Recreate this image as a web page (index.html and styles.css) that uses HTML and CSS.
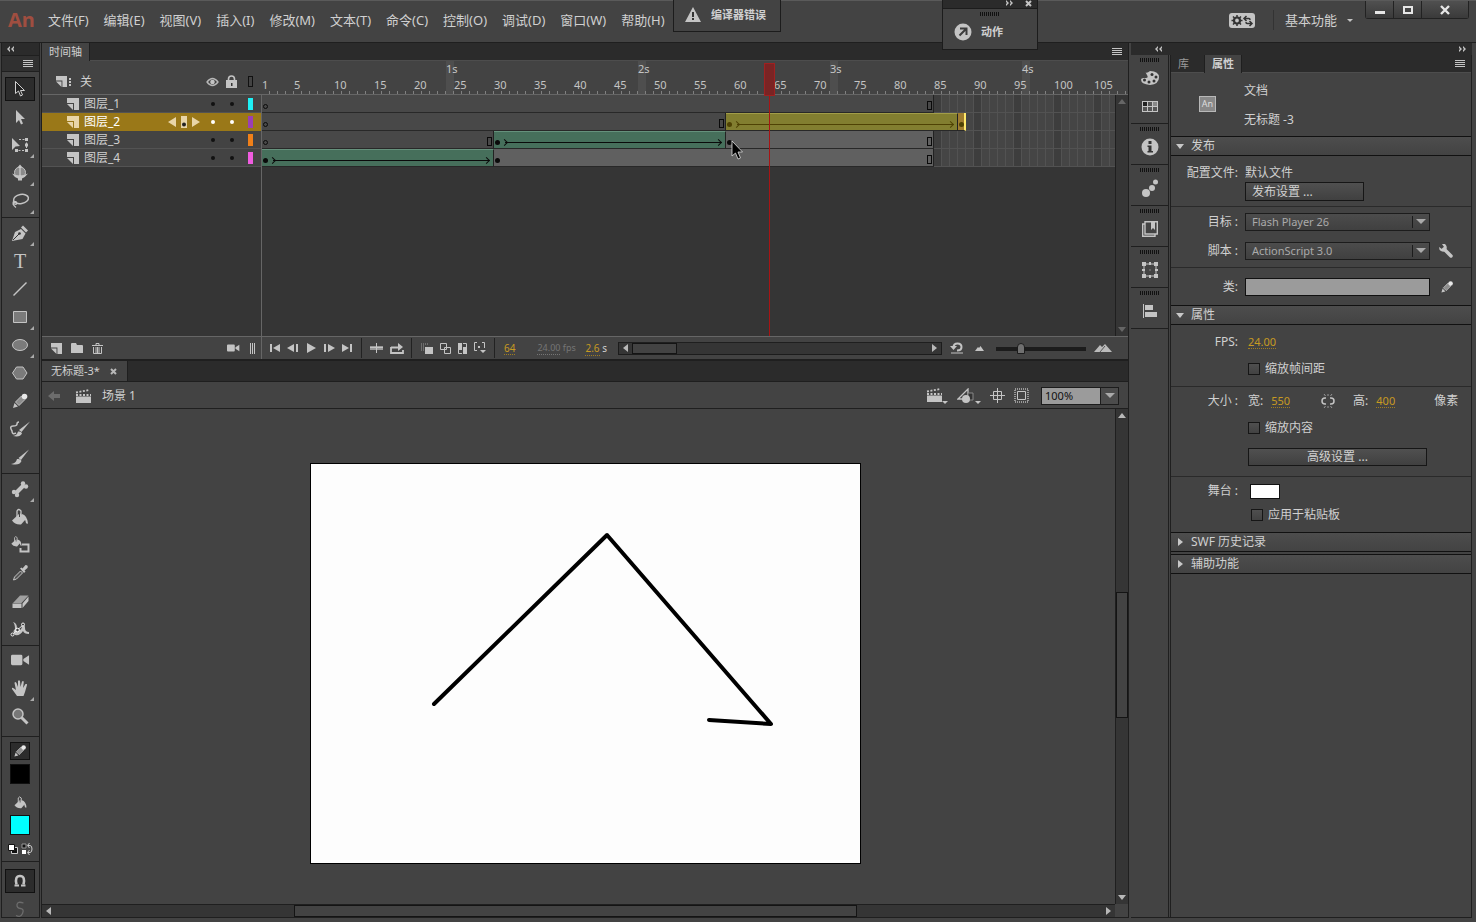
FILE: index.html
```
<!DOCTYPE html>
<html lang="zh-CN">
<head>
    <meta charset="utf-8">
    <title>无标题-3 - An</title>
    <link rel="stylesheet" href="styles.css">
</head>
<body>
<svg class="defs" aria-hidden="true">
	<symbol id="i-page" viewBox="0 0 12 12"><path d="M0 0h12v12H7V5H0z"/><path d="M0 6h6v6z"/></symbol>
	<symbol id="i-menu" viewBox="0 0 10 8"><path d="M0 0h10v1H0zM0 2h10v1H0zM0 4h10v1H0zM0 6h10v1H0z"/></symbol>
	<symbol id="i-left2" viewBox="0 0 8 6"><path d="M3 0L0 3l3 3V4L2 3l1-1zM7 0L4 3l3 3V4L6 3l1-1z"/></symbol>
	<symbol id="i-right2" viewBox="0 0 8 6"><path d="M1 0l3 3-3 3V4l1-1-1-1zM5 0l3 3-3 3V4l1-1-1-1z"/></symbol>
	<symbol id="i-clap" viewBox="0 0 16 14"><path d="M1 7.500h15V14H1z"/><path d="M1 3.500L14 1M1 6h15" fill="none" stroke="#c4c4c4" stroke-width="1.800" stroke-dasharray="2 1.500"/></symbol>
	<symbol id="i-pencil" viewBox="0 0 20 20"><path d="M3 17l1.500-5 3.500 3.500z"/><path d="M5.500 11l6-6 3.500 3.500-6 6z" fill="#8d8d8d" stroke="#c4c4c4"/><circle cx="14.500" cy="5.500" r="2.800" fill="#e8e8e8"/></symbol>
	<symbol id="i-bucket" viewBox="0 0 20 20"><path d="M2 13.500L10 6l6 6-5 5.500q-6 .5-9-4z"/><path d="M7 10V4q1.500-3 4 0v5" fill="none" stroke="#c4c4c4" stroke-width="1.300"/><path d="M12 7q5 1 6 9.500-2 .5-2.200-1-.3-4-3.800-5.500z"/><path d="M9.500 6v4" stroke="#444"/></symbol>
	<symbol id="i-cam" viewBox="0 0 20 14"><path d="M0 3q0-1.500 1.500-1.500h9Q12 1.500 12 3v8q0 1.500-1.500 1.500h-9Q0 12.500 0 11zM13 6l6-4v10l-6-4z"/></symbol>
</svg>

<!-- 菜单栏 -->
<header class="topbar">
	<div class="logo">An</div>
	<nav class="menu">
		<a href="#">文件(F)</a><a href="#">编辑(E)</a><a href="#">视图(V)</a><a href="#">插入(I)</a><a href="#">修改(M)</a><a href="#">文本(T)</a><a href="#">命令(C)</a><a href="#">控制(O)</a><a href="#">调试(D)</a><a href="#">窗口(W)</a><a href="#">帮助(H)</a>
	</nav>
	<button type="button" class="sync" aria-label="同步设置">
		<svg width="26" height="15" viewBox="0 0 26 15"><rect width="26" height="15" rx="3"/><circle cx="8" cy="7.500" r="3" fill="none" stroke="#333" stroke-width="2.200"/><path d="M8 2v2M8 11v2M2.500 7.500h2M11.500 7.500h2M4 3.500l1.500 1.500M12 3.500L10.500 5M4 11.500L5.500 10M12 11.500L10.500 10M15 5.500h5q1 0 1 1.500M17.500 3L15 5.500 17.500 8M23 10.500h-5q-1 0-1-1.500M20.500 8l2.500 2.500-2.500 2.500" fill="none" stroke="#333" stroke-width="1.500"/></svg>
	</button>
	<button type="button" class="workspace">基本功能<i class="caret"></i></button>
	<div class="winbtns">
		<button type="button" aria-label="最小化"><svg width="10" height="10"><path d="M0 6h10v3H0z"/></svg></button>
		<button type="button" aria-label="最大化"><svg width="10" height="10"><path d="M1 2h8v6H1z" fill="none" stroke="#e6e6e6" stroke-width="2"/></svg></button>
		<button type="button" class="close" aria-label="关闭"><svg width="10" height="10"><path d="M1 1l8 8M9 1L1 9" stroke="#e6e6e6" stroke-width="2.400"/></svg></button>
	</div>
</header>

<div class="float float-error">
	<svg width="16" height="15" viewBox="0 0 16 15"><path d="M8 0l8 15H0z"/><path d="M8 5v5M8 11v2" stroke="#333" stroke-width="2"/></svg>
	<span>编译器错误</span>
</div>
<div class="float float-action">
	<div class="float-hd"><svg width="8" height="6"><use href="#i-right2"/></svg><svg width="7" height="7" viewBox="0 0 7 7"><path d="M1 1l5 5M6 1L1 6" stroke="#c4c4c4" stroke-width="2"/></svg></div>
	<i class="grip"></i>
	<div class="float-bd">
		<svg width="18" height="18" viewBox="0 0 18 18"><circle cx="9" cy="9" r="8.500"/><path d="M5.500 12.500l6-6M6 5.500h6.500V12" fill="none" stroke="#3c3c3c" stroke-width="2"/></svg>
		<span>动作</span>
	</div>
</div>

<div class="work">
	<!-- 工具栏 -->
	<aside class="tools">
		<div class="tools-hd"><svg width="8" height="6"><use href="#i-left2"/></svg></div>
		<div class="tools-menu"><svg width="10" height="8"><use href="#i-menu"/></svg></div>
		<div class="group first">
			<button type="button" class="tool on" aria-label="选择"><svg viewBox="0 0 20 20"><path d="M5.500 2.500v12l3-2.500 2 5 2-1-2-4.500h4z" fill="#222" stroke="#d0d0d0"/></svg></button>
			<button type="button" class="tool" aria-label="部分选取"><svg viewBox="0 0 20 20"><path d="M6 3v13l3-3 2 4.500 2-1-2-4.500h4z"/></svg></button>
			<button type="button" class="tool more" aria-label="任意变形"><svg viewBox="0 0 20 20"><path d="M2 3v12l3.500-3.500 4.500-.500z"/><path d="M9 4.500h7.500v11H5.500" fill="none" stroke="#c4c4c4" stroke-dasharray="2 1.500"/><path d="M15 3h3v3h-3zM15 14h3v3h-3zM15 8.500h3v3h-3zM5 14h3v3H5z"/></svg></button>
			<button type="button" class="tool more" aria-label="3D 旋转"><svg viewBox="0 0 20 20"><circle cx="10" cy="9.500" r="5.500" fill="#8a8a8a" stroke="#c4c4c4"/><path d="M10 1.500l2.500 3h-5zM2 10.500q8 4 16 0-3 4-6 5v2H8v-2q-4-1.500-6-5z"/><path d="M10 4v9" fill="none" stroke="#ddd"/></svg></button>
			<button type="button" class="tool more" aria-label="套索"><svg viewBox="0 0 20 20"><ellipse cx="11" cy="8" rx="7.500" ry="4.500" fill="none" stroke="#c4c4c4" stroke-width="1.500" transform="rotate(-10 11 8)"/><path d="M4 10q-2 2 .5 3t2-1.500T3 13q1 2 3 3.500" fill="none" stroke="#c4c4c4" stroke-width="1.300"/></svg></button>
		</div>
		<div class="group">
			<button type="button" class="tool more" aria-label="钢笔"><svg viewBox="0 0 20 20"><path d="M2 18l3-9 6-3 4.500 4.500-3 5.500z"/><path d="M11 4.500l2-2 5 5-2 2z"/><path d="M3 17l6-6" stroke="#333"/><circle cx="9.500" cy="10.500" r="1.300" fill="#333"/></svg></button>
			<button type="button" class="tool" aria-label="文本"><span class="t">T</span></button>
			<button type="button" class="tool" aria-label="线条"><svg viewBox="0 0 20 20"><path d="M3.500 16.500l13-13" stroke="#c4c4c4" stroke-width="1.500"/></svg></button>
			<button type="button" class="tool more" aria-label="矩形"><svg viewBox="0 0 20 20"><path d="M3.500 4.500h13v11h-13z" fill="#7b7b7b" stroke="#c4c4c4"/></svg></button>
			<button type="button" class="tool more" aria-label="椭圆"><svg viewBox="0 0 20 20"><ellipse cx="10" cy="10" rx="7.500" ry="5.500" fill="#7b7b7b" stroke="#c4c4c4"/></svg></button>
			<button type="button" class="tool" aria-label="多角星形"><svg viewBox="0 0 20 20"><path d="M6.500 4h6.500l4 6-4 6H6.500l-4-6z" fill="#7b7b7b" stroke="#c4c4c4"/></svg></button>
			<button type="button" class="tool" aria-label="铅笔"><svg viewBox="0 0 20 20"><use href="#i-pencil"/></svg></button>
			<button type="button" class="tool" aria-label="画笔"><svg viewBox="0 0 20 20"><path d="M9 3q-2 0-2 2T3 7t-1 5q0 4 4 2" fill="none" stroke="#c4c4c4" stroke-width="1.500"/><path d="M20 2.500L11.500 13 9 11z"/><path d="M3 17q4-.5 5-4.500 3.500-.5 4 2-2 4-9 2.500z"/></svg></button>
			<button type="button" class="tool" aria-label="刷子"><svg viewBox="0 0 20 20"><path d="M19 2.500L11 13 8.500 11z"/><path d="M1 17q5-.5 6-5 4-.5 4.500 2-2 5-10.500 3z"/></svg></button>
		</div>
		<div class="group">
			<button type="button" class="tool more" aria-label="骨骼"><svg viewBox="0 0 20 20"><path d="M6 14l8-8" stroke="#c4c4c4" stroke-width="4"/><circle cx="4" cy="13" r="2.200"/><circle cx="7" cy="16" r="2.200"/><circle cx="13" cy="4.500" r="2.200"/><circle cx="16" cy="7.500" r="2.200"/></svg></button>
			<button type="button" class="tool" aria-label="颜料桶"><svg viewBox="0 0 20 20"><use href="#i-bucket"/></svg></button>
			<button type="button" class="tool" aria-label="墨水瓶"><svg viewBox="0 0 20 20"><use href="#i-bucket" width="13" height="13"/><path d="M12 9.500h6.500v7h-8V13" fill="none" stroke="#c4c4c4" stroke-width="2"/></svg></button>
			<button type="button" class="tool" aria-label="滴管"><svg viewBox="0 0 20 20"><path d="M3.500 17l1-3 6-6 2 2-6 6z" fill="#555" stroke="#c4c4c4"/><path d="M10 5.500l1.500-1 1 1L15.500 2q3 0 2 3l-3 2.500 1 1L14 10z"/></svg></button>
			<button type="button" class="tool" aria-label="橡皮擦"><svg viewBox="0 0 20 20"><path d="M3 12l7-7.500h8.500L11.500 12z" fill="#a0a0a0"/><path d="M2.500 12.500h9V17h-9zM12.500 12.500l6-7V10l-6 7z"/></svg></button>
			<button type="button" class="tool" aria-label="宽度"><svg viewBox="0 0 20 20"><path d="M3 3q4 1 4 6l3 2q2-1 2-5 3-1 3 3 0 4 4 4v2q-5 0-6-3-3 5-8 4-3-4 0-6 0-5-2-7z"/><path d="M3 15L14 5" stroke="#eee"/><circle cx="2.500" cy="15.500" r="1.500" fill="#444" stroke="#eee"/><circle cx="7.500" cy="11" r="1.800" fill="#444" stroke="#fff"/><circle cx="13" cy="5.500" r="1.500" fill="#444" stroke="#eee"/></svg></button>
		</div>
		<div class="group view">
			<button type="button" class="tool" aria-label="摄像头"><svg viewBox="0 0 20 20"><use href="#i-cam" x="1" y="3" width="19" height="14"/></svg></button>
			<button type="button" class="tool more" aria-label="手形"><svg viewBox="0 0 20 20"><path d="M7 18l-5-7q-.5-2 2-.5L6 12 4.500 5q.5-2 2 0L8 9V3q1-1.500 2 0l.500 6L12 3.500q1.500-1 1.800.5L13 10l2.500-4q2-.5 1.500 1l-2 7-1.500 4z"/></svg></button>
			<button type="button" class="tool" aria-label="缩放"><svg viewBox="0 0 20 20"><circle cx="8" cy="8" r="5" fill="#777" stroke="#c4c4c4" stroke-width="1.500"/><path d="M11.500 11.500l6 6" stroke="#c4c4c4" stroke-width="3"/></svg></button>
		</div>
		<div class="group colors">
			<button type="button" class="mini on" aria-label="笔触颜色"><svg width="18" height="16" viewBox="0 0 20 20"><use href="#i-pencil"/></svg></button>
			<button type="button" class="swatch black" aria-label="笔触"></button>
			<button type="button" class="mini fill" aria-label="填充颜色"><svg width="15" height="15" viewBox="0 0 20 20"><use href="#i-bucket"/></svg></button>
			<button type="button" class="swatch cyan" aria-label="填充"></button>
			<div class="swap">
				<button type="button" aria-label="黑白"><svg width="12" height="12"><path d="M4.500 4.500h6v6h-6z" fill="#111" stroke="#ccc"/><path d="M1.500 1.500h6v6h-6z" fill="#fff" stroke="#111"/></svg></button>
				<button type="button" aria-label="交换颜色"><svg width="13" height="12"><path d="M1 1h4v4H1z" fill="#111" stroke="#999"/><path d="M1 7h4v4H1z" fill="#fff"/><path d="M7 2.500h2q2 0 2 3.500t-2 3.500H7M8.500 0L6.500 2.500 8.500 5M8.500 7L6.500 9.500l2 2.500" fill="none" stroke="#ccc"/></svg></button>
			</div>
		</div>
		<div class="group last">
			<button type="button" class="tool on snap" aria-label="贴紧至对象"><svg viewBox="0 0 20 20"><path d="M6.500 13.500q-2-8.500 3.500-8.500t3.500 8.500" fill="none" stroke="#c4c4c4" stroke-width="2.600"/><path d="M9 14.500H4.500M15.500 14.500H11" stroke="#c4c4c4" stroke-width="2"/></svg></button>
			<button type="button" class="tool dim" aria-label="平滑"><svg viewBox="0 0 20 20"><path d="M13.500 4q-6-2-6.500 1.500T10.500 9.500t2 5T6 16.500" fill="none" stroke="#777" stroke-width="1.300"/></svg></button>
		</div>
	</aside>

	<main class="main">
		<!-- 时间轴 -->
		<section class="timeline">
			<div class="tabs"><a href="#" class="tab">时间轴</a><svg class="tabs-menu" width="10" height="8"><use href="#i-menu"/></svg></div>
			<div class="tl-head">
				<div class="layer-hd">
					<svg width="16" height="12"><use href="#i-page" width="11" height="11"/><path d="M13 2h2v2h-2zM13 5h2v2h-2zM13 8h2v2h-2z"/></svg>
					<span class="off">关</span>
					<span class="cell"><svg width="13" height="10" viewBox="0 0 13 10"><path d="M1 5q5.500-7 11 0-5.500 7-11 0z" fill="none" stroke="#b8b8b8" stroke-width="1.300"/><circle cx="6.500" cy="5" r="2.300"/></svg></span>
					<span class="cell"><svg width="11" height="13"><path d="M2.500 6V4q0-3 3-3t3 3v2" fill="none" stroke="#c4c4c4" stroke-width="1.600"/><path d="M0 5h11v8H0z"/><path d="M5 8h1.500v3H5z" fill="#333"/></svg></span>
					<span class="cell"><i class="outline"></i></span>
				</div>
				<div class="ruler">
					<div class="secs"><b class="s0"></b><b>1s</b><b>2s</b><b>3s</b><b>4s</b></div>
					<div class="nums"><b class="n1">1</b><b>5</b><b>10</b><b>15</b><b>20</b><b>25</b><b>30</b><b>35</b><b>40</b><b>45</b><b>50</b><b>55</b><b>60</b><b>65</b><b>70</b><b>75</b><b>80</b><b>85</b><b>90</b><b>95</b><b>100</b><b>105</b></div>
				</div>
			</div>
			<div class="tl-body">
				<div class="layers">
					<div class="layer"><svg width="12" height="12"><use href="#i-page"/></svg><span class="name">图层_1</span><span class="cell"><i class="dot"></i></span><span class="cell"><i class="dot"></i></span><span class="cell"><i class="color c1"></i></span></div>
					<div class="layer active"><svg width="12" height="12"><use href="#i-page"/></svg><span class="name">图层_2</span><span class="keynav"><svg width="32" height="12" viewBox="0 0 32 12"><path d="M8 1v10L0 6zM24 1v10l8-5z"/><path d="M13 0h6v12h-6z"/><circle cx="16" cy="8.500" r="2" fill="#222"/></svg></span><span class="cell"><i class="dot"></i></span><span class="cell"><i class="dot"></i></span><span class="cell"><i class="color c2"></i></span></div>
					<div class="layer"><svg width="12" height="12"><use href="#i-page"/></svg><span class="name">图层_3</span><span class="cell"><i class="dot"></i></span><span class="cell"><i class="dot"></i></span><span class="cell"><i class="color c3"></i></span></div>
					<div class="layer"><svg width="12" height="12"><use href="#i-page"/></svg><span class="name">图层_4</span><span class="cell"><i class="dot"></i></span><span class="cell"><i class="dot"></i></span><span class="cell"><i class="color c4"></i></span></div>
				</div>
				<div class="frames">
					<div class="track"><div class="span" style="--n:84"><i class="key empty"></i><i class="end"></i></div></div>
					<div class="track"><div class="span" style="--n:58"><i class="key empty"></i><i class="end"></i></div><div class="span tween sel" style="--n:29"><i class="key"></i><i class="arrow"></i></div><div class="span sel last" style="--n:1"><i class="key"></i></div></div>
					<div class="track"><div class="span" style="--n:29"><i class="key empty"></i><i class="end"></i></div><div class="span tween" style="--n:29"><i class="key"></i><i class="arrow"></i></div><div class="span full" style="--n:26"><i class="key"></i><i class="end"></i></div></div>
					<div class="track"><div class="span tween" style="--n:29"><i class="key"></i><i class="arrow"></i></div><div class="span full" style="--n:55"><i class="key"></i><i class="end"></i></div></div>
				</div>
				<div class="vscroll off"><i class="up"></i><i class="down"></i></div>
			</div>
			<div class="playhead" style="--frame:64"></div>
			<div class="tl-foot">
				<div class="foot-l">
					<button type="button" aria-label="新建图层"><svg width="11" height="11"><use href="#i-page"/></svg></button>
					<button type="button" aria-label="新建文件夹"><svg width="12" height="10"><path d="M0 1q0-1 1-1h4l1 2h5q1 0 1 1v7H0z"/></svg></button>
					<button type="button" aria-label="删除"><svg width="11" height="11"><path d="M0 2.500h11M4 2V.500h3V2M1.500 4v6.500h8V4M4 4v6M5.500 4v6M7 4v6" fill="none" stroke="#c4c4c4"/></svg></button>
					<button type="button" class="cam" aria-label="添加摄像头"><svg width="13" height="10" viewBox="0 0 19 14"><use href="#i-cam" width="19" height="14"/></svg></button>
					<svg width="7" height="11"><path d="M1 0h1v11H1zM3 0h1v11H3zM5 0h1v11H5z"/></svg>
				</div>
				<div class="foot-r">
					<div class="play">
						<button type="button" aria-label="转到第一帧"><svg width="12" height="8"><path d="M1 0h2v8H1zM11 0v8L4 4z"/></svg></button>
						<button type="button" aria-label="后退一帧"><svg width="12" height="8"><path d="M0 4l7-4v8zM9 0h2v8H9z"/></svg></button>
						<button type="button" aria-label="播放"><svg width="12" height="10"><path d="M2 0l9 5-9 5z"/></svg></button>
						<button type="button" aria-label="前进一帧"><svg width="12" height="8"><path d="M1 0h2v8H1zM5 0l7 4-7 4z"/></svg></button>
						<button type="button" aria-label="转到最后一帧"><svg width="12" height="8"><path d="M1 0l7 4-7 4zM9 0h2v8H9z"/></svg></button>
					</div>
					<div class="opts">
						<button type="button" aria-label="帧居中"><svg width="13" height="10"><path d="M0 3h13v4H0z" fill="#999"/><path d="M0 4h13v1H0zM6 0h1v10H6z"/></svg></button>
						<button type="button" aria-label="循环"><svg width="14" height="11"><path d="M1 4v6h12V7M1 4.500h7" fill="none" stroke="#c4c4c4" stroke-width="1.800"/><path d="M8 0l5 4-5 4z"/></svg></button>
					</div>
					<div class="opts onion">
						<button type="button" aria-label="绘图纸外观"><svg width="12" height="11"><path d="M4 4h8v7H4z"/><path d="M0 1h7M0 3h4M0 5h3M0 7h3" stroke="#999" stroke-dasharray="1 1"/></svg></button>
						<button type="button" aria-label="绘图纸外观轮廓"><svg width="11" height="11"><path d="M.5.500h6v6h-6zM4.500 4.500h6v6h-6z" fill="none" stroke="#c4c4c4"/></svg></button>
						<button type="button" aria-label="编辑多个帧"><svg width="9" height="11"><path d="M0 0h4v7H0zM5 4h4v7H5z"/><path d="M.5 7v3.500H4M5 .500h3.500V4" fill="none" stroke="#c4c4c4"/></svg></button>
						<button type="button" aria-label="修改标记"><svg width="12" height="12"><path d="M3 .500H.500v8H3M8 .500h2.500V6" fill="none" stroke="#c4c4c4"/><path d="M4 4h2v2H4zM6 8h6l-3 3z"/></svg></button>
					</div>
					<a href="#" class="hot frame-no">64</a>
					<span class="fps"><u>24.00</u> fps</span>
					<span class="time"><a href="#" class="hot">2.6</a> s</span>
					<div class="hscroll mini-scroll"><i class="left"></i><div class="rail"><i class="thumb"></i></div><i class="right"></i></div>
					<button type="button" aria-label="重置缩放"><svg width="13" height="12"><path d="M3.500 5.500q0-4 4-4 4 0 4 3.500T7 8.500" fill="none" stroke="#c4c4c4" stroke-width="2"/><path d="M0 4h7L3.500 8zM1 10.500h12v1H1z"/></svg></button>
					<svg class="m-small" width="9" height="5"><path d="M0 5l3-4 1 1 1.500-2L9 5z"/></svg>
					<input type="range" class="range" min="0" max="100" value="26" aria-label="时间轴缩放">
					<svg width="18" height="8"><path d="M0 8l6-7 2 2 3-3 7 8z" fill="#bbb"/><path d="M6 8l5-6" fill="none" stroke="#555"/></svg>
				</div>
			</div>
		</section>

		<!-- 文档 -->
		<section class="doc">
			<div class="tabs doc-tabs"><a href="#" class="tab">无标题-3*<svg width="7" height="7"><path d="M1 1l5 5M6 1L1 6" stroke="#b8b8b8" stroke-width="2"/></svg></a></div>
			<div class="scene">
				<svg class="back" width="13" height="10"><path d="M0 5l6-5v3h6v4H6v3z" fill="#6c6c6c"/></svg>
				<svg width="16" height="14"><use href="#i-clap"/></svg>
				<span class="scene-name">场景 1</span>
				<button type="button" aria-label="编辑场景"><svg width="22" height="16"><use href="#i-clap" width="16" height="14"/><path d="M16 13h6l-3 3z"/></svg></button>
				<button type="button" aria-label="编辑元件"><svg width="24" height="16"><path d="M1 11L11 1v10z" fill="none" stroke="#c4c4c4" stroke-width="1.300"/><path d="M11 5h5v7h-5z" fill="#333" stroke="#888"/><circle cx="9" cy="11" r="4"/><path d="M18 13h6l-3 3z"/></svg></button>
				<button type="button" aria-label="舞台居中"><svg width="15" height="15"><path d="M3.500 3.500h8v8h-8zM7.500 0v15M0 7.500h15" fill="none" stroke="#c4c4c4"/></svg></button>
				<button type="button" aria-label="剪切掉舞台范围以外的内容"><svg width="15" height="15"><path d="M1 1h13v13H1z" fill="none" stroke="#999" stroke-width="2" stroke-dasharray="1 1"/><path d="M3.500 3.500h8v8h-8z" fill="none" stroke="#c4c4c4"/></svg></button>
				<label class="select zoom"><select aria-label="显示比例"><option>100%</option><option>200%</option></select></label>
			</div>
			<div class="canvas">
				<div class="paste">
					<svg class="stage" width="549" height="399"><path d="M123 240L296 71l164 189-62-4" fill="none" stroke="#000" stroke-width="4" stroke-linecap="round" stroke-linejoin="round"/></svg>
				</div>
				<div class="vscroll"><i class="up"></i><div class="rail"><i class="thumb"></i></div><i class="down"></i></div>
				<div class="hscroll"><i class="left"></i><div class="rail"><i class="thumb"></i></div><i class="right"></i></div>
			</div>
		</section>
	</main>

	<!-- 右侧面板 -->
	<aside class="side">
		<div class="side-hd"><svg width="8" height="6"><use href="#i-left2"/></svg><svg width="8" height="6"><use href="#i-right2"/></svg></div>
		<div class="side-bd">
			<div class="dock">
				<div class="dock-g"><i class="grip"></i>
					<button type="button" aria-label="颜色"><svg width="20" height="16"><path d="M10 1q9 0 9 6.500T10 15Q1 14 1 9.500q0-2 4-1.500T7 5 6 2.500 10 1z"/><g fill="#333"><circle cx="12" cy="4.500" r="1.500"/><circle cx="16" cy="7" r="1.500"/><circle cx="14" cy="11" r="1.500"/><circle cx="9" cy="12" r="1.500"/><circle cx="4.500" cy="10" r="1.500"/></g></svg></button>
					<button type="button" aria-label="样本"><svg width="16" height="11"><path d="M0 0h16v11H0z"/><path d="M1 1h4v4H1z" fill="#222"/><path d="M6 1h4v4H6z" fill="#555"/><path d="M11 1h4v4h-4z" fill="#888"/><path d="M1 6h4v4H1zM6 6h4v4H6zM11 6h4v4h-4z" fill="#555"/></svg></button>
				</div>
				<div class="dock-g"><i class="grip"></i><button type="button" aria-label="信息"><svg width="18" height="18"><circle cx="9" cy="9" r="8.500"/><path d="M7.500 3h3v3h-3zM6.500 7.500h4V13H12v1.500H6.500V13h1V9h-1z" fill="#333"/></svg></button></div>
				<div class="dock-g"><i class="grip"></i><button type="button" aria-label="对齐"><svg width="18" height="18"><circle cx="5" cy="14" r="4"/><circle cx="11" cy="9" r="3"/><circle cx="14.500" cy="3" r="2.500"/></svg></button></div>
				<div class="dock-g"><i class="grip"></i><button type="button" aria-label="库"><svg width="16" height="16"><path d="M3 .700h12.300V13H3zM3 3H.700v12.300H13V13" fill="none" stroke="#c4c4c4" stroke-width="1.400"/><path d="M9 1h4v8l-2-2-2 2z"/></svg></button></div>
				<div class="dock-g"><i class="grip"></i><button type="button" aria-label="变形"><svg width="16" height="16"><path d="M2 2h12v12H2z" fill="none" stroke="#c4c4c4"/><path d="M0 0h4v4H0zM12 0h4v4h-4zM0 12h4v4H0zM12 12h4v4h-4zM7 0h2v3H7zM7 13h2v3H7zM0 7h3v2H0zM13 7h3v2h-3zM7.500 7.500h1v1h-1z"/></svg></button></div>
				<div class="dock-g"><i class="grip"></i><button type="button" aria-label="排列"><svg width="16" height="14"><path d="M1 0h1v14H1zM3 1h8v5H3zM3 8h12v5H3z"/></svg></button></div>
			</div>
			<form class="props">
				<div class="tabs"><a href="#" class="tab gray">库</a><a href="#" class="tab">属性</a><svg class="tabs-menu" width="10" height="8"><use href="#i-menu"/></svg></div>
				<div class="docinfo">
					<span class="an">An</span>
					<div><p>文档</p><p>无标题 -3</p></div>
				</div>
				<h2 class="hd open">发布</h2>
				<div class="block b1">
					<div class="row"><span class="lab">配置文件:</span><span>默认文件</span></div>
					<div class="row"><span class="lab"></span><button type="button" class="btn w120">发布设置 ...</button></div>
				</div>
				<div class="block b2">
					<div class="row"><label class="lab" for="target">目标 :</label><span class="select"><select id="target"><option>Flash Player 26</option></select></span></div>
					<div class="row"><label class="lab" for="script">脚本 :</label><span class="select"><select id="script"><option>ActionScript 3.0</option></select></span><svg class="tail" width="14" height="14" viewBox="0 0 14 14"><path d="M5 5l7 7" stroke="#c4c4c4" stroke-width="3.500" stroke-linecap="round"/><path d="M3 0l3 0Q9 3 7 6T2 7Q0 6 0 3l3 2 2-2z"/></svg></div>
				</div>
				<div class="block b3">
					<div class="row"><label class="lab" for="cls">类:</label><input type="text" id="cls" class="text"><svg class="tail" width="16" height="16" viewBox="0 0 20 20"><use href="#i-pencil"/></svg></div>
				</div>
				<h2 class="hd open">属性</h2>
				<div class="block b4">
					<div class="row"><span class="lab">FPS:</span><a href="#" class="hot in">24.00</a></div>
					<div class="row"><span class="lab"></span><label class="check"><input type="checkbox">缩放帧间距</label></div>
				</div>
				<div class="block b5">
					<div class="row size"><span class="lab">大小 :</span><span class="in">宽:</span><a href="#" class="hot">550</a><svg class="link" width="14" height="14"><path d="M5 4H4Q1 4 1 7t3 3h1M9 4h1q3 0 3 3t-3 3H9" fill="none" stroke="#c4c4c4" stroke-width="1.500"/><path d="M3 0l1.500 2M11 0L9.500 2M7 0v2M3 14l1.500-2M11 14l-1.500-2M7 14v-2" stroke="#999"/></svg><span>高:</span><a href="#" class="hot">400</a><span class="px">像素</span></div>
					<div class="row"><span class="lab"></span><label class="check"><input type="checkbox">缩放内容</label></div>
					<div class="row wide"><span class="lab"></span><button type="button" class="btn w180">高级设置 ...</button></div>
				</div>
				<div class="block b6">
					<div class="row"><span class="lab">舞台 :</span><button type="button" class="bgcolor" aria-label="舞台颜色"></button></div>
					<div class="row"><span class="lab"></span><label class="check deep"><input type="checkbox">应用于粘贴板</label></div>
				</div>
				<h2 class="hd">SWF 历史记录</h2>
				<h2 class="hd next">辅助功能</h2>
			</form>
		</div>
	</aside>
</div>
<svg class="cursor" width="12" height="20" viewBox="0 0 12 20"><path d="M1 1v15l3.500-3 2.500 6 2.500-1L7 12h4.500z" fill="#000" stroke="#ddd" stroke-width=".8"/></svg>
</body>
</html>
```

FILE: styles.css
```
*{box-sizing:border-box;}
html,body{height:100%;}
body{margin:0;background:#434343;color:#d0d0d0;font:12px/18px "Noto Sans","Noto Sans CJK SC",sans-serif;display:flex;flex-direction:column;overflow:hidden;position:relative;}
button{margin:0;padding:0;border:0;background:none;color:inherit;font:inherit;display:flex;align-items:center;justify-content:center;}
a{color:inherit;text-decoration:none;}
p,h2{margin:0;font-weight:normal;}
svg{display:block;flex:none;fill:#c4c4c4;}
i{display:block;flex:none;}
.defs{position:absolute;width:0;height:0;}

/* 菜单栏 */
.topbar{height:42px;flex:none;display:flex;align-items:center;border-top:1px solid #5a5a5a;padding:0 7px 3px 8px;}
.logo{width:40px;color:#a04e40;font:bold 20px/30px "Noto Sans",sans-serif;}
.menu{display:flex;gap:15px;font-size:13px;flex:1;white-space:nowrap;}
.sync{margin-right:18px;}
.workspace{border-left:1px solid #333;padding-left:11px;height:20px;font-size:13px;gap:10px;}
.caret{border:3px solid transparent;border-top-color:#c4c4c4;border-bottom:0;}
.winbtns{display:flex;align-self:flex-start;margin-left:12px;border:1px solid #222;border-top:0;border-radius:0 0 3px 3px;}
.winbtns button{width:28px;height:17px;background:linear-gradient(#505050,#3a3a3a);border-right:1px solid #222;}
.winbtns .close{width:46px;border-right:0;}
.winbtns svg{fill:#e6e6e6;}

/* 浮动面板 */
.float{position:absolute;top:0;z-index:10;background:#434343;border:1px solid #1c1c1c;border-top:0;font-size:11px;font-weight:bold;}
.float-error{left:673px;width:108px;height:32px;display:flex;align-items:center;gap:10px;padding:0 0 2px 11px;}
.float-action{left:942px;width:96px;height:50px;}
.float-hd{height:9px;background:#2b2b2b;border-bottom:1px solid #1c1c1c;display:flex;justify-content:flex-end;gap:12px;padding-right:5px;}
.float-bd{display:flex;align-items:center;gap:9px;padding:7px 0 0 11px;}
.grip{width:20px;height:4px;background:repeating-linear-gradient(90deg,#111 0,#111 1px,#434343 1px,#434343 2px);margin:3px auto 0;}

.work{flex:1;display:flex;min-height:0;padding:0 4px 4px 1px;border-top:1px solid #1f1f1f;}

/* 工具栏 */
.tools{width:39px;flex:none;margin-right:1px;border:1px solid #1f1f1f;border-top:0;}
.tools-hd{height:12px;background:#2b2b2b;display:flex;align-items:center;padding-left:5px;}
.tools-menu{height:17px;background:#303030;border-top:1px solid #1f1f1f;border-bottom:1px solid #1f1f1f;display:flex;align-items:center;justify-content:flex-end;padding-right:6px;}
.group{display:flex;flex-direction:column;align-items:center;padding:1px 1px 2px 0;border-top:1px solid #1f1f1f;}
.group.first{border-top:0;padding-top:3px;}
.tool{width:30px;height:24px;margin:2px 0;position:relative;}
.tool svg{width:20px;height:20px;}
.tool.on{background:#2c2c2c;border:1px solid #111;}
.tool.more:after{content:"";position:absolute;right:1px;bottom:-1px;border:2px solid transparent;border-right-color:#aaa;border-bottom-color:#aaa;}
.tool .t{font:20px/24px "Liberation Serif",serif;color:#c4c4c4;}
.group.view{padding:0 1px 6px 0;}
.group.colors{padding:5px 1px 6px 0;}
.mini{width:20px;height:18px;}
.mini.on{background:#2c2c2c;border:1px solid #111;}
.mini.fill{margin-top:9px;}
.swatch{width:20px;height:20px;border:1px solid #111;margin-top:4px;}
.swatch.black{background:#000;}
.swatch.cyan{background:#0ff;}
.swap{display:flex;gap:2px;margin-top:8px;}
.group.last{padding-top:5px;}
.tool.dim{opacity:.8;}

/* 选项卡 */
.tabs{height:18px;flex:none;background:#2b2b2b;border-bottom:1px solid #4d4d4d;display:flex;align-items:stretch;}
.tab{background:#434343;border-right:1px solid #1f1f1f;font-size:11px;padding:0 7px;display:flex;align-items:center;gap:10px;margin-bottom:-1px;}
.tabs-menu{margin:auto 6px auto auto;}

/* 时间轴 */
.main{flex:1;min-width:0;display:flex;flex-direction:column;border:1px solid #1f1f1f;border-top:0;}
.timeline{flex:none;position:relative;display:flex;flex-direction:column;border-bottom:2px solid #1f1f1f;}
.tl-head{height:34px;display:flex;border-bottom:1px solid #666;}
.layer-hd{width:220px;flex:none;display:flex;align-items:center;padding:8px 2px 0 14px;}
.off{flex:1;padding-left:8px;}
.cell{width:19px;flex:none;display:flex;align-items:center;justify-content:center;}
.outline{width:5px;height:11px;border:1px solid #111;}
.ruler{flex:1;min-width:0;overflow:hidden;font-size:11px;line-height:16px;color:#c4c4c4;background:repeating-linear-gradient(90deg,transparent 0,transparent 7px,#808080 7px,#808080 8px) 0 100%/100% 3px no-repeat,repeating-linear-gradient(90deg,transparent 0,transparent 184px,#4e4e4e 184px,#4e4e4e 192px);}
.ruler b{font-weight:normal;width:40px;flex:none;}
.ruler .n1{width:32px;}
.secs,.nums{display:flex;height:16px;}
.secs b{width:192px;}
.secs .s0{width:184px;}
.tl-body{height:241px;display:flex;background:#353535;}
.layers{width:220px;flex:none;border-right:1px solid #666;}
.layer{height:18px;background:#434343;border-bottom:1px solid #535353;display:flex;align-items:center;padding:0 1px 0 25px;}
.layer .name{flex:1;padding-left:5px;}
.layer.active{background:#9a7818;border-color:#9a7818;color:#fff;}
.layer.active svg{fill:#e8d5a8;}
.keynav{width:35px;}
.dot{width:4px;height:4px;border-radius:50%;background:#111;}
.active .dot{background:#fff;}
.color{width:5px;height:12px;}
.c1{background:#1ef0f5;}
.c2{background:#9a3fb5;}
.c3{background:#f08019;}
.c4{background:#f05ce0;}
.frames{flex:1;min-width:0;overflow:hidden;}
.track{height:18px;display:flex;border-bottom:1px solid #525252;background:repeating-linear-gradient(90deg,transparent 0,transparent 7px,#525252 7px,#525252 8px),repeating-linear-gradient(90deg,#454545 0,#454545 32px,#3d3d3d 32px,#3d3d3d 40px);}
.span{width:calc(var(--n) * 8px);height:18px;flex:none;display:flex;align-items:center;justify-content:space-between;padding:6px 1px 0 1px;background:#484848;border-right:1px solid #222;border-bottom:1px solid #282828;}
.span.full{background:#606060;}
.span.tween{background:#466f5b;border-top:1px solid #65917c;padding-top:5px;}
.span.sel,.span.tween.sel{background:#827e30;border-top-color:#a29d48;color:#4f4204;}
.span.sel.last{background:#a07d30;border-right:2px solid #ffe96b;padding-right:0;}
.key{width:5px;height:5px;border-radius:50%;background:#0a0a0a;}
.sel .key{background:#4f4204;}
.key.empty{background:none;border:1px solid #0a0a0a;}
.end{width:5px;height:9px;border:1px solid #0a0a0a;margin-top:-2px;}
.arrow{flex:1;height:1px;background:currentColor;margin:0 3px 0 5px;position:relative;color:#0a0a0a;}
.sel .arrow{color:#4f4204;}
.arrow:before,.arrow:after{content:"";position:absolute;top:-2px;width:4px;height:4px;border:1px solid;border-left:0;border-bottom:0;transform:rotate(45deg);}
.arrow:before{left:-3px;}
.arrow:after{right:0;}
.playhead{position:absolute;left:calc(220px + (var(--frame) - 1) * 8px - 1px);top:20px;bottom:23px;width:9px;display:flex;flex-direction:column;align-items:center;}
.playhead:before{content:"";width:9px;height:31px;background:#7a2424;border:1px solid #a02020;}
.playhead:after{content:"";flex:1;width:1px;background:#a81414;}
.tl-foot{height:23px;display:flex;border-top:1px solid #666;}
.foot-l{width:220px;flex:none;border-right:1px solid #666;display:flex;align-items:center;gap:9px;padding:0 5px 0 9px;}
.foot-l .cam{margin-left:auto;}
.foot-r{flex:1;min-width:0;display:flex;align-items:center;font-size:10px;padding-right:16px;}
.play,.opts{display:flex;align-items:center;height:20px;border-right:1px solid #222;}
.play{width:100px;gap:6px;padding-left:7px;}
.opts{width:50px;gap:7px;padding-left:8px;}
.opts.onion{width:83px;padding-left:9px;}
.hot{color:#c79a22;border-bottom:1px dotted #a07d20;line-height:12px;}
.frame-no{margin:0 22px 0 9px;}
.fps{color:#757575;font-size:9px;width:48px;white-space:nowrap;}
.fps u{text-decoration:none;border-bottom:1px dotted #757575;}
.time{width:33px;white-space:nowrap;}
.mini-scroll{flex:1;margin-right:8px;border:1px solid #1c1c1c;}
.m-small{margin:0 12px;}
.range{-webkit-appearance:none;appearance:none;width:90px;height:14px;margin:0 8px 0 0;background:linear-gradient(#1c1c1c,#1c1c1c) 0 6px/100% 4px no-repeat;}
.range::-webkit-slider-thumb{-webkit-appearance:none;width:8px;height:11px;background:#707070;border:1px solid #1c1c1c;border-radius:4px 4px 0 0;}

/* 滚动条 */
.vscroll{width:13px;flex:none;background:#353535;border-left:1px solid #1f1f1f;display:flex;flex-direction:column;justify-content:space-between;align-items:center;padding:4px 0;}
.hscroll{height:13px;background:#353535;border-top:1px solid #1f1f1f;display:flex;align-items:center;padding:0 4px;}
.rail{flex:1;display:flex;}
.hscroll .rail{height:100%;margin:0 2px;}
.vscroll .rail{width:100%;flex-direction:column;margin:2px 0;}
.mini-scroll .rail{margin:0 4px;}
.thumb{background:#434343;border:1px solid #141414;}
.up{border:4px solid transparent;border-bottom:5px solid #b8b8b8;border-top:0;}
.down{border:4px solid transparent;border-top:5px solid #b8b8b8;border-bottom:0;}
.left{border:4px solid transparent;border-right:5px solid #b8b8b8;border-left:0;}
.right{border:4px solid transparent;border-left:5px solid #b8b8b8;border-right:0;}
.vscroll.off .up{border-bottom-color:#666;}
.vscroll.off .down{border-top-color:#666;}
.mini-scroll .thumb{width:15%;}

/* 文档 */
.doc{flex:1;min-height:0;display:flex;flex-direction:column;}
.doc-tabs{height:21px;border-bottom-color:#1f1f1f;}
.doc-tabs .tab{padding:0 10px 0 9px;margin-bottom:0;}
.scene{height:27px;flex:none;display:flex;align-items:center;gap:9px;padding:1px 9px 0 6px;border-bottom:1px solid #1f1f1f;}
.scene-name{flex:1;padding-left:2px;}
.scene .back{margin-right:5px;}
.canvas{flex:1;min-height:0;display:grid;grid-template:1fr 13px / 1fr 13px;}
.paste{display:flex;align-items:center;justify-content:center;padding:13px 0 0 13px;min-height:0;overflow:hidden;}
.stage{background:#fdfdfd;outline:1px solid #000;}
.canvas .hscroll .thumb{margin-left:22.9%;width:53.6%;}
.canvas .vscroll .rail{display:grid;grid-template-rows:36.4% 26.7% 1fr;}
.canvas .vscroll .thumb{grid-row:2;}

/* 右侧面板 */
.side{width:341px;flex:none;margin-left:2px;display:flex;flex-direction:column;border-bottom:1px solid #1f1f1f;}
.side-hd{height:12px;background:#2b2b2b;display:flex;align-items:center;justify-content:space-between;padding:0 6px 0 24px;}
.side-bd{flex:1;display:flex;}
.dock{width:38px;flex:none;border-right:1px solid #1f1f1f;margin-right:1px;}
.dock-g{height:41px;border-bottom:1px solid #1f1f1f;display:flex;flex-direction:column;}
.dock-g:first-child{height:69px;}
.dock-g .grip{margin-bottom:2px;}
.dock-g button{height:28px;}
.props{flex:1;border:1px solid #1f1f1f;border-top:0;border-bottom:0;}
.props .tab{padding:0 7px;font-weight:bold;}
.props .tab.gray{background:none;color:#999;width:34px;font-weight:normal;}
.docinfo{display:flex;padding:9px 0 0 28px;height:63px;}
.docinfo p{margin-bottom:11px;}
.docinfo div{margin-left:28px;}
.an{width:17px;height:16px;margin-top:14px;background:#888;border:1px solid #b8b8b8;color:#ddd;font-size:9px;line-height:14px;text-align:center;}
.hd{height:20px;border:1px solid #111;border-width:1px 0;background:linear-gradient(#4d4d4d,#434343);font-size:12px;line-height:18px;padding-left:5px;display:flex;align-items:center;gap:7px;}
.hd:before{content:"";border:4px solid transparent;border-left:5px solid #c8c8c8;border-right:0;margin:0 1px 0 2px;}
.hd.open:before{border:4px solid transparent;border-top:5px solid #c8c8c8;border-bottom:0;margin:0;}
.hd.next{margin-top:2px;}
.block{display:flex;flex-direction:column;border-bottom:1px solid #2a2a2a;}
.b3,.b6{border-bottom:0;}
.b1{padding:8px 0 5px;}
.b2{padding:6px 0 7px;gap:11px;}
.b3{padding:10px 0 9px;}
.b4{padding:8px 0;gap:9px;}
.b5{padding:5px 0 10px;gap:9px;}
.b6{padding:5px 0 8px;gap:6px;}
.row{display:flex;align-items:center;min-height:18px;}
.row.wide{margin-top:2px;}
.lab{width:67px;margin-right:7px;flex:none;text-align:right;}
.btn{height:19px;border:1px solid #161616;background:linear-gradient(#505050,#404040);}
.w120{width:119px;justify-content:flex-start;padding-left:6px;}
.w180{width:179px;height:18px;margin-left:3px;}
.select{position:relative;width:185px;height:18px;display:block;}
.select select{-webkit-appearance:none;appearance:none;width:100%;height:18px;padding:0 0 0 6px;margin:0;display:block;border:1px solid #1c1c1c;border-radius:0;background:linear-gradient(#1c1c1c,#1c1c1c) 166px 2px/1px 12px no-repeat,linear-gradient(#4c4c4c,#404040);color:#aaa;font:11px/16px "Noto Sans",sans-serif;}
.select:after{content:"";position:absolute;right:4px;top:6px;border:5px solid transparent;border-top-color:#aaa;border-bottom:0;pointer-events:none;}
.select.zoom{width:78px;margin-left:3px;}
.zoom select{background:linear-gradient(90deg,#9b9b9b 0,#9b9b9b 58px,#1c1c1c 58px,#1c1c1c 59px,#4c4c4c 59px);color:#111;padding-left:3px;}
.tail{margin-left:9px;}
.text{width:185px;height:18px;border:1px solid #111;background:#9b9b9b;padding:0 4px;border-radius:0;}
.in{margin-left:3px;}
.row .hot{font-size:11px;}
.size .hot{margin-left:8px;}
.link{margin:0 18px 0 31px;}
.px{margin-left:39px;}
.check{display:flex;align-items:center;gap:5px;margin-left:3px;}
.check.deep{margin-left:6px;}
.check input{-webkit-appearance:none;appearance:none;width:12px;height:12px;margin:0;border:1px solid #161616;background:linear-gradient(#4f4f4f,#424242);}
.bgcolor{width:30px;height:15px;background:#fff;border:1px solid #111;margin-left:5px;}
.cursor{position:absolute;left:731px;top:140px;z-index:5;}
```
